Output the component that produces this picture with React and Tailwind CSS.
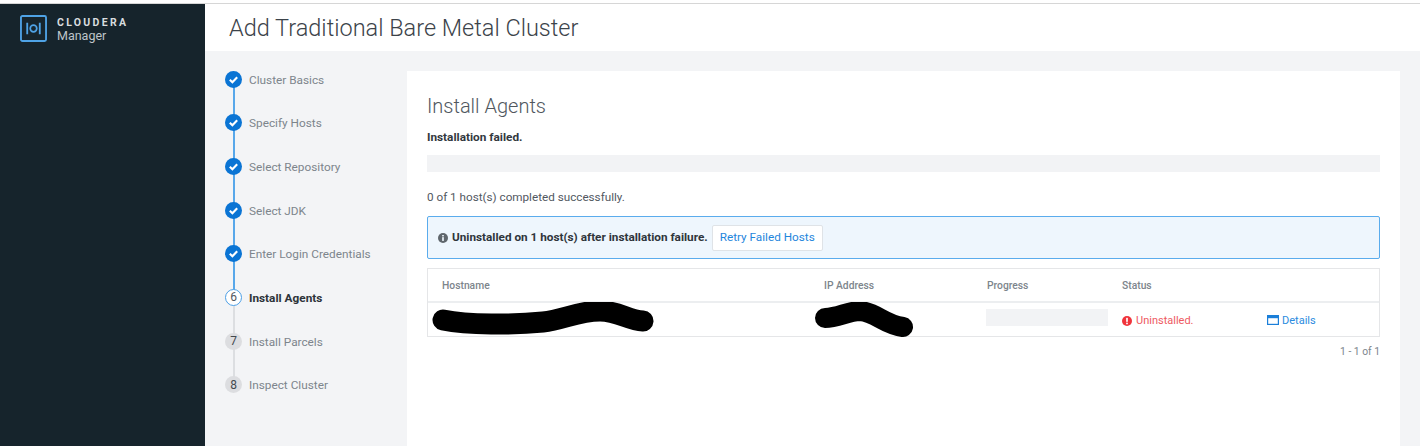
import React from "react";

const steps = [
  { label: "Cluster Basics", state: "done" },
  { label: "Specify Hosts", state: "done" },
  { label: "Select Repository", state: "done" },
  { label: "Select JDK", state: "done" },
  { label: "Enter Login Credentials", state: "done" },
  { label: "Install Agents", state: "current", n: 6 },
  { label: "Install Parcels", state: "todo", n: 7 },
  { label: "Inspect Cluster", state: "todo", n: 8 },
];

function Step({ step, last }) {
  const lineBlue = step.state === "done";
  return (
    <div className="flex h-[43.7px] relative">
      {!last && (
        <div className={`absolute left-[8px] top-[16px] h-[30px] w-[1.5px] ${lineBlue ? "bg-[#57a7ea]" : "bg-[#dcdee1]"}`} />
      )}
      <div className="relative z-10 w-[17px] h-[17px] shrink-0">
        {step.state === "done" && (
          <svg viewBox="0 0 17 17" className="w-[17px] h-[17px]">
            <circle cx="8.5" cy="8.5" r="8.5" fill="#0a74d4" />
            <path d="M4.8 8.8l2.6 2.5 4.8-5" fill="none" stroke="#fff" strokeWidth="2.1" />
          </svg>
        )}
        {step.state === "current" && (
          <div className="w-[17px] h-[17px] rounded-full border border-[#4c9fe6] bg-white flex items-center justify-center text-[12px] leading-none text-[#52585f]">6</div>
        )}
        {step.state === "todo" && (
          <div className="w-[17px] h-[17px] rounded-full bg-[#dcdde0] flex items-center justify-center text-[12px] leading-none text-[#43494f]">{step.n}</div>
        )}
      </div>
      <div className={`ml-[6px] pl-[1px] text-[11.8px] leading-[17px] mt-[1px] ${step.state === "current" ? "font-bold text-[#2d3339]" : "text-[#7d858c]"}`}>
        {step.label}
      </div>
    </div>
  );
}

export default function App() {
  return (
    <div className="h-[446px] w-[1420px] overflow-hidden bg-white font-['Roboto',sans-serif] flex flex-col">
      <div className="h-[4px] shrink-0 bg-[#ffffff] border-b-[1px] border-[#d6d6d6]" />
      <div className="flex flex-1 min-h-0">
        <aside className="w-[205px] shrink-0 bg-[#16242c] pl-[20px] pt-[10px]">
          <div className="flex items-center">
            <svg viewBox="0 0 28 28" className="w-[27px] h-[27px]">
              <rect x="1" y="1" width="26" height="26" rx="1.5" fill="none" stroke="#4fa3e6" strokeWidth="1.9" />
              <path d="M7.5 8v12M20.5 8v12" stroke="#4fa3e6" strokeWidth="1.9" />
              <circle cx="14" cy="14" r="3.4" fill="none" stroke="#4fa3e6" strokeWidth="1.8" />
            </svg>
            <div className="ml-[10px] mt-[2px] text-[#d8dcdf]">
              <div className="text-[10.5px] leading-[13px] font-bold tracking-[2.3px]">CLOUDERA</div>
              <div className="text-[12.5px] leading-[14px] text-[#bfc5c9]">Manager</div>
            </div>
          </div>
        </aside>
        <main className="flex-1 min-w-0 flex flex-col bg-[#f3f4f6]">
          <header className="h-[47px] shrink-0 bg-white pl-[24px] text-[23.5px] leading-[49px] font-light text-[#3c434a]">
            Add Traditional Bare Metal Cluster
          </header>
          <div className="flex flex-1 min-h-0 pl-[20px] pr-[20px] pt-[20px]">
            <nav className="w-[182px] shrink-0 -mt-[0.5px]">
              {steps.map((s, i) => (
                <Step key={s.label} step={s} last={i === steps.length - 1} />
              ))}
            </nav>
            <section className="flex-1 min-w-0 bg-white px-[20px] pt-[23px]">
              <h2 className="text-[20px] leading-[24px] font-light text-[#50575e]">Install Agents</h2>
              <p className="mt-[12px] text-[11.8px] leading-[15px] font-bold text-[#32383e]">Installation failed.</p>
              <div className="mt-[10px] h-[17px] bg-[#f2f3f5]" />
              <p className="mt-[18px] text-[11.7px] leading-[15px] text-[#52585f]">0 of 1 host(s) completed successfully.</p>
              <div className="mt-[11px] h-[43px] rounded-[2px] border border-[#5aaced] bg-[#eef6fd] flex items-center pl-[10px]">
                <svg viewBox="0 0 12 12" className="w-[10px] h-[10px] shrink-0">
                  <circle cx="6" cy="6" r="6" fill="#5f666c" />
                  <rect x="5" y="5" width="2" height="4.5" fill="#eef6fd" />
                  <rect x="5" y="2.4" width="2" height="1.7" fill="#eef6fd" />
                </svg>
                <span className="ml-[4px] text-[11.75px] font-bold text-[#2f353b]">Uninstalled on 1 host(s) after installation failure.</span>
                <button className="ml-[4px] h-[26px] px-[7px] rounded-[2px] border border-[#dfe3e7] bg-white text-[11.75px] text-[#1f86dc]">Retry Failed Hosts</button>
              </div>
              <div className="mt-[9px] border border-[#e5e6e8]">
                <div className="h-[34px] flex items-center border-b-[2px] border-[#eceef0] pt-[2px] text-[10.3px] font-medium text-[#7d858c]">
                  <div className="w-[396px] pl-[14px]">Hostname</div>
                  <div className="w-[163px]">IP Address</div>
                  <div className="w-[135px]">Progress</div>
                  <div>Status</div>
                </div>
                <div className="h-[33px] relative flex items-center text-[11px]">
                  <svg viewBox="0 0 500 40" className="absolute left-0 top-[-1px] w-[500px] h-[40px] pointer-events-none">
                    <path d="M15 18 C 40 23, 85 23, 115 20 C 135 18, 150 9, 172 9 C 190 9, 200 18, 215 19" fill="none" stroke="#000" strokeWidth="21" strokeLinecap="round" strokeLinejoin="round" />
                    <path d="M397 16 C 410 16, 420 9, 432 9 C 448 10, 455 22, 475 25" fill="none" stroke="#000" strokeWidth="20" strokeLinecap="round" strokeLinejoin="round" />
                  </svg>
                  <div className="w-[559px] shrink-0" />
                  <div className="w-[135px] shrink-0 mb-[4px]">
                    <div className="w-[122px] h-[17px] -ml-[1px] bg-[#f2f3f5]" />
                  </div>
                  <div className="w-[145px] shrink-0 flex items-center mt-[3px] text-[#ee5a62]">
                    <svg viewBox="0 0 12 12" className="w-[10px] h-[10px] shrink-0 mb-[1px]">
                      <circle cx="6" cy="6" r="6" fill="#f0343c" />
                      <rect x="5" y="2.2" width="2" height="4.8" fill="#fff" />
                      <rect x="5" y="8" width="2" height="1.9" fill="#fff" />
                    </svg>
                    <span className="ml-[4px]">Uninstalled.</span>
                  </div>
                  <div className="flex items-center mt-[3px] text-[#2a8be0]">
                    <svg viewBox="0 0 12 10" className="w-[12px] h-[10px] shrink-0 mb-[3px]">
                      <rect x="0.6" y="0.6" width="10.8" height="8.8" fill="none" stroke="#1b7fd9" strokeWidth="1.2" />
                      <rect x="0.6" y="0.6" width="10.8" height="2.6" fill="#1b7fd9" />
                    </svg>
                    <span className="ml-[3px]">Details</span>
                  </div>
                </div>
              </div>
              <div className="mt-[8px] text-right text-[10.3px] leading-[14px] text-[#7d858c]">1 - 1 of 1</div>
            </section>
          </div>
        </main>
      </div>
    </div>
  );
}
